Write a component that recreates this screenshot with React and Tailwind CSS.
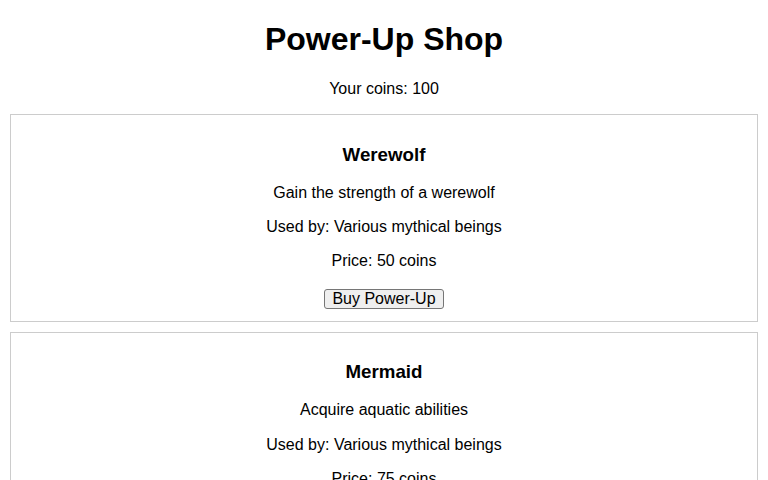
const powerUps = [
  {
    name: "Werewolf",
    description: "Gain the strength of a werewolf",
    usedBy: "Various mythical beings",
    price: 50,
  },
  {
    name: "Mermaid",
    description: "Acquire aquatic abilities",
    usedBy: "Various mythical beings",
    price: 75,
  },
  {
    name: "Vampire",
    description: "Become a creature of the night",
    usedBy: "Various mythical beings",
    price: 100,
  },
];

function PowerUpCard({ powerUp }) {
  return (
    <div className="m-[10px] border border-[#cccccc] p-[10px] text-center">
      <h3 className="mt-[18.5px] mb-[18.5px] text-[18.72px] font-bold leading-[1.15]">
        {powerUp.name}
      </h3>
      <p className="my-4 leading-[1.15]">{powerUp.description}</p>
      <p className="my-4 leading-[1.15]">Used by: {powerUp.usedBy}</p>
      <p className="my-4 leading-[1.15]">Price: {powerUp.price} coins</p>
      <button className="rounded-[3px] border border-[#767676] bg-[#efefef] px-[7px] py-0 text-base leading-[1.15] text-black">
        Buy Power-Up
      </button>
    </div>
  );
}

export default function App() {
  const coins = 100;
  return (
    <div className="min-h-screen bg-white text-black font-['Liberation_Sans',Arial,sans-serif]">
      <h1 className="my-[21.44px] text-center text-[32px] font-bold leading-[1.15]">
        Power-Up Shop
      </h1>
      <p className="my-4 text-center leading-[1.15]">Your coins: {coins}</p>
      {powerUps.map((p) => (
        <PowerUpCard key={p.name} powerUp={p} />
      ))}
    </div>
  );
}
